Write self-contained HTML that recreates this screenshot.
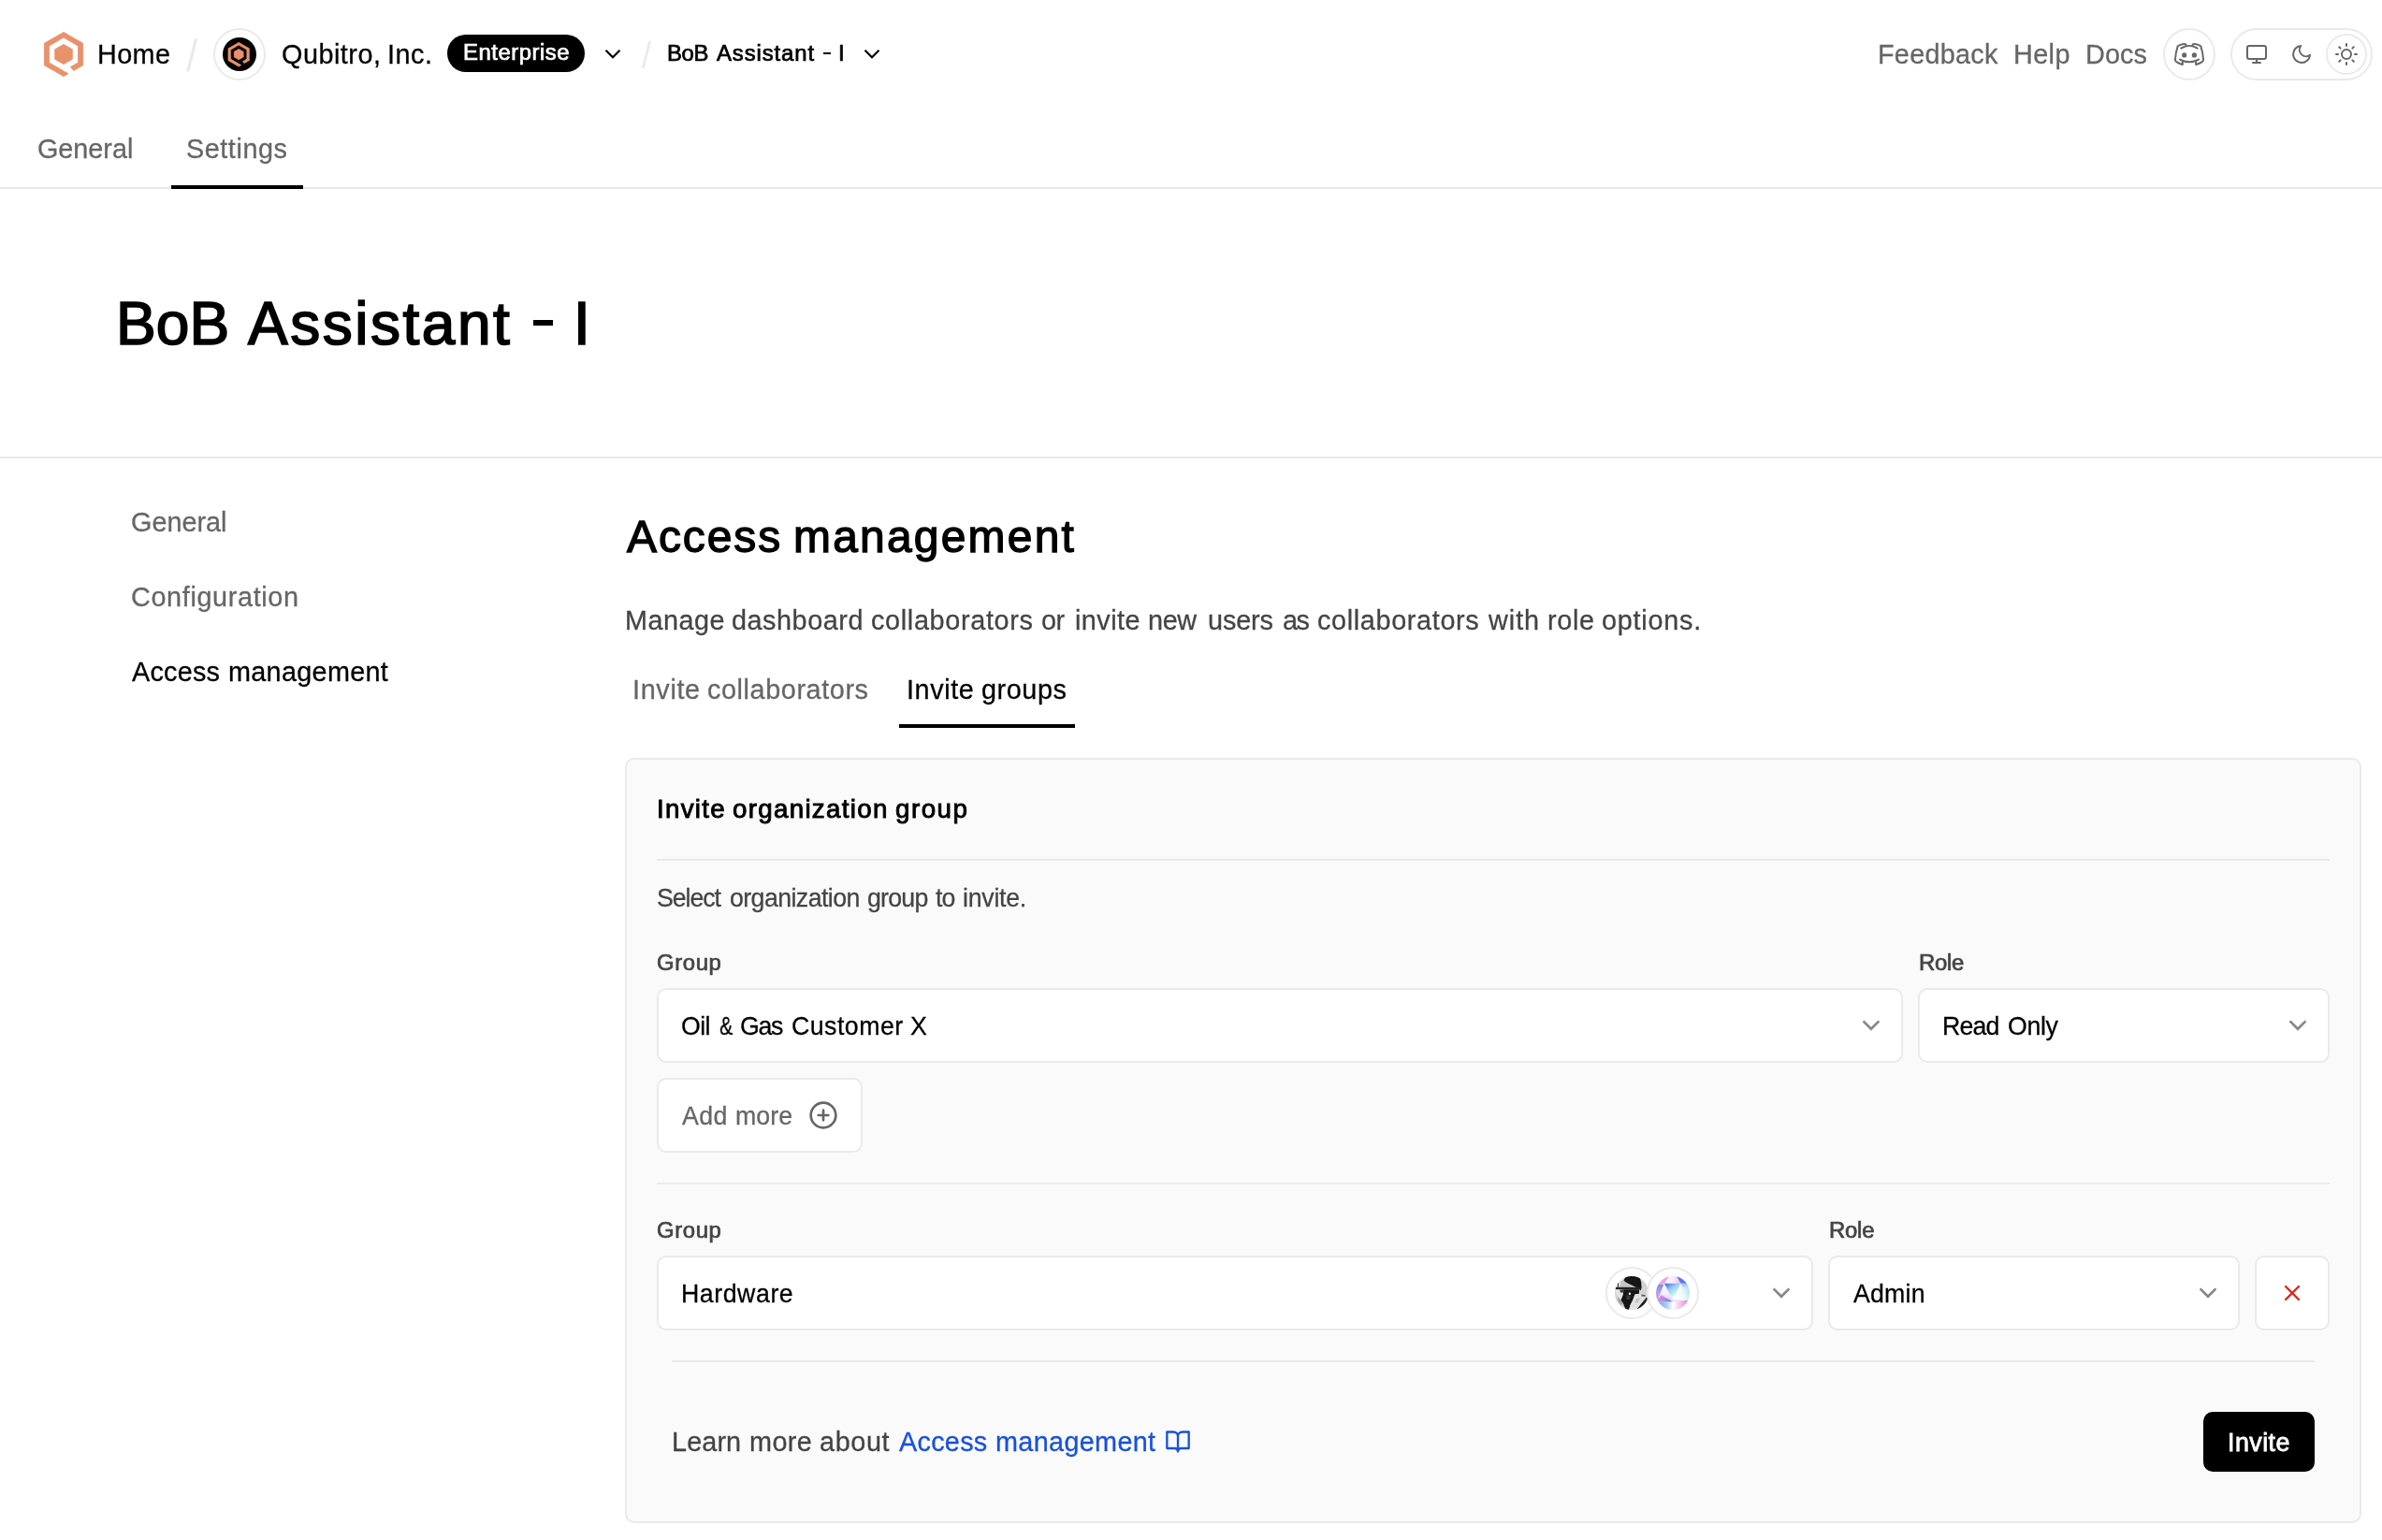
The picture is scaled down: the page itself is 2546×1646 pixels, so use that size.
<!DOCTYPE html>
<html lang="en">
<head>
<meta charset="utf-8">
<title>BoB Assistant - I – Settings – Access management</title>
<style>
*{box-sizing:border-box;margin:0;padding:0}
html,body{width:2546px;height:1646px;background:#fff}
body{overflow:hidden}
body{position:relative;font-family:"Liberation Sans",sans-serif;font-kerning:none}
h1,h2,h3,p,a,label,span{font-weight:400;font-size:inherit}
.t{will-change:transform;position:absolute;white-space:nowrap;line-height:1;font-weight:400;display:block}
.abs{position:absolute;display:block}
.hr{position:absolute;height:2px;background:#eaeaea}
.ring{position:absolute;border:2px solid #eaeaea;border-radius:50%;background:#fff}
.box{position:absolute;border:2px solid #eaeaea;border-radius:10px;background:#fff;height:80px}
svg{position:absolute;display:block;overflow:visible}
.ic{fill:none;stroke-width:2;stroke-linecap:round;stroke-linejoin:round}
#home{left:104.04px;top:43.86px;font-size:28.79px;letter-spacing:0.382px;color:#000;-webkit-text-stroke:0.29px #000;}
#org_0{left:300.84px;top:43.66px;font-size:28.79px;letter-spacing:0.504px;color:#000;-webkit-text-stroke:0.29px #000;}
#org_1{left:414.44px;top:43.66px;font-size:28.79px;letter-spacing:0.539px;color:#000;-webkit-text-stroke:0.29px #000;}
#ent{left:494.66px;top:44.34px;font-size:23.89px;letter-spacing:0.528px;color:#fff;-webkit-text-stroke:0.72px #fff;}
#crumb_0{left:713.36px;top:45.44px;font-size:23.89px;letter-spacing:-0.36px;color:#000;-webkit-text-stroke:0.72px #000;}
#crumb_1{left:766.16px;top:45.44px;font-size:23.89px;letter-spacing:0.894px;color:#000;-webkit-text-stroke:0.72px #000;}
#crumb_2{left:880.0px;top:56.0px;width:7.6px;height:2.2px;background:#000;color:transparent;font-size:23.89px;overflow:hidden;line-height:0}
#crumb_3{left:895.8px;top:45.44px;font-size:23.89px;letter-spacing:0px;color:#000;-webkit-text-stroke:0.72px #000;}
#fb{left:2006.94px;top:43.66px;font-size:28.79px;letter-spacing:0.272px;color:#666;-webkit-text-stroke:0.29px #666;}
#help{left:2152.34px;top:43.66px;font-size:28.79px;letter-spacing:0.409px;color:#666;-webkit-text-stroke:0.29px #666;}
#docs{left:2229.14px;top:43.66px;font-size:28.79px;letter-spacing:0.11px;color:#666;-webkit-text-stroke:0.29px #666;}
#tab1{left:40.44px;top:144.66px;font-size:28.79px;letter-spacing:-0.014px;color:#666;-webkit-text-stroke:0.29px #666;}
#tab2{left:199.44px;top:144.66px;font-size:28.79px;letter-spacing:0.558px;color:#666;-webkit-text-stroke:0.29px #666;}
#title_0{left:124.46px;top:313.84px;font-size:64.02px;letter-spacing:0.095px;color:#000;-webkit-text-stroke:1.73px #000;}
#title_1{left:265.46px;top:313.84px;font-size:64.02px;letter-spacing:2.525px;color:#000;-webkit-text-stroke:1.73px #000;}
#title_2{left:569.8px;top:341.5px;width:21.3px;height:6.3px;background:#000;color:transparent;font-size:64.02px;overflow:hidden;line-height:0}
#title_3{left:612.55px;top:313.84px;font-size:64.02px;letter-spacing:0px;color:#000;-webkit-text-stroke:1.73px #000;}
#s1{left:140.34px;top:543.66px;font-size:28.79px;letter-spacing:0.002px;color:#666;-webkit-text-stroke:0.29px #666;}
#s2{left:140.34px;top:623.66px;font-size:28.79px;letter-spacing:0.652px;color:#666;-webkit-text-stroke:0.29px #666;}
#s3_0{left:141.04px;top:703.76px;font-size:28.79px;letter-spacing:0.227px;color:#000;-webkit-text-stroke:0.29px #000;}
#s3_1{left:244.34px;top:703.76px;font-size:28.79px;letter-spacing:0.313px;color:#000;-webkit-text-stroke:0.29px #000;}
#h2_0{left:670.27px;top:550.03px;font-size:47.94px;letter-spacing:1.923px;color:#000;-webkit-text-stroke:1.34px #000;}
#h2_1{left:847.57px;top:550.03px;font-size:47.94px;letter-spacing:2.23px;color:#000;-webkit-text-stroke:1.34px #000;}
#desc_0{left:667.84px;top:648.76px;font-size:28.79px;letter-spacing:0.502px;color:#444;-webkit-text-stroke:0.29px #444;}
#desc_1{left:781.94px;top:648.76px;font-size:28.79px;letter-spacing:0.55px;color:#444;-webkit-text-stroke:0.29px #444;}
#desc_2{left:931.34px;top:648.76px;font-size:28.79px;letter-spacing:0.677px;color:#444;-webkit-text-stroke:0.29px #444;}
#desc_3{left:1112.74px;top:648.76px;font-size:28.79px;letter-spacing:-0.395px;color:#444;-webkit-text-stroke:0.29px #444;}
#desc_4{left:1149.04px;top:648.76px;font-size:28.79px;letter-spacing:0.466px;color:#444;-webkit-text-stroke:0.29px #444;}
#desc_5{left:1227.44px;top:648.76px;font-size:28.79px;letter-spacing:-0.351px;color:#444;-webkit-text-stroke:0.29px #444;}
#desc_6{left:1291.24px;top:648.76px;font-size:28.79px;letter-spacing:-0.119px;color:#444;-webkit-text-stroke:0.29px #444;}
#desc_7{left:1370.64px;top:648.76px;font-size:28.79px;letter-spacing:-1.595px;color:#444;-webkit-text-stroke:0.29px #444;}
#desc_8{left:1408.44px;top:648.76px;font-size:28.79px;letter-spacing:0.661px;color:#444;-webkit-text-stroke:0.29px #444;}
#desc_9{left:1591.44px;top:648.76px;font-size:28.79px;letter-spacing:0.979px;color:#444;-webkit-text-stroke:0.29px #444;}
#desc_10{left:1654.04px;top:648.76px;font-size:28.79px;letter-spacing:0.642px;color:#444;-webkit-text-stroke:0.29px #444;}
#desc_11{left:1711.74px;top:648.76px;font-size:28.79px;letter-spacing:0.772px;color:#444;-webkit-text-stroke:0.29px #444;}
#it1_0{left:675.54px;top:722.86px;font-size:28.79px;letter-spacing:0.666px;color:#666;-webkit-text-stroke:0.29px #666;}
#it1_1{left:756.24px;top:722.86px;font-size:28.79px;letter-spacing:0.602px;color:#666;-webkit-text-stroke:0.29px #666;}
#it2_0{left:969.14px;top:722.96px;font-size:28.79px;letter-spacing:0.586px;color:#000;-webkit-text-stroke:0.29px #000;}
#it2_1{left:1048.64px;top:722.96px;font-size:28.79px;letter-spacing:0.58px;color:#000;-webkit-text-stroke:0.29px #000;}
#ch_0{left:701.66px;top:851.24px;font-size:27.74px;letter-spacing:1.264px;color:#000;-webkit-text-stroke:0.92px #000;}
#ch_1{left:783.26px;top:851.24px;font-size:27.74px;letter-spacing:1.291px;color:#000;-webkit-text-stroke:0.92px #000;}
#ch_2{left:956.76px;top:851.24px;font-size:27.74px;letter-spacing:1.494px;color:#000;-webkit-text-stroke:0.92px #000;}
#csub_0{left:702.03px;top:947.37px;font-size:26.73px;letter-spacing:-1.061px;color:#444;-webkit-text-stroke:0.27px #444;}
#csub_1{left:779.83px;top:947.37px;font-size:26.73px;letter-spacing:-0.571px;color:#444;-webkit-text-stroke:0.27px #444;}
#csub_2{left:926.63px;top:947.37px;font-size:26.73px;letter-spacing:-0.761px;color:#444;-webkit-text-stroke:0.27px #444;}
#csub_3{left:1000.43px;top:947.37px;font-size:26.73px;letter-spacing:-0.991px;color:#444;-webkit-text-stroke:0.27px #444;}
#csub_4{left:1029.03px;top:947.37px;font-size:26.73px;letter-spacing:-0.257px;color:#444;-webkit-text-stroke:0.27px #444;}
#lg1{left:702.26px;top:1016.94px;font-size:23.89px;letter-spacing:0.626px;color:#444;-webkit-text-stroke:0.72px #444;}
#lr1{left:2050.86px;top:1017.04px;font-size:23.89px;letter-spacing:-0.28px;color:#444;-webkit-text-stroke:0.72px #444;}
#v1_0{left:728.23px;top:1083.77px;font-size:26.73px;letter-spacing:-0.643px;color:#000;-webkit-text-stroke:0.27px #000;}
#v1_1{left:768.93px;top:1083.77px;font-size:26.73px;letter-spacing:0px;color:#000;-webkit-text-stroke:0.27px #000;transform:scaleX(0.796);transform-origin:0 0;}
#v1_2{left:791.43px;top:1083.77px;font-size:26.73px;letter-spacing:-1.305px;color:#000;-webkit-text-stroke:0.27px #000;}
#v1_3{left:846.43px;top:1083.77px;font-size:26.73px;letter-spacing:0.474px;color:#000;-webkit-text-stroke:0.27px #000;}
#v1_4{left:972.65px;top:1083.77px;font-size:26.73px;letter-spacing:0px;color:#000;-webkit-text-stroke:0.27px #000;}
#v2_0{left:2075.63px;top:1083.87px;font-size:26.73px;letter-spacing:-0.827px;color:#000;-webkit-text-stroke:0.27px #000;}
#v2_1{left:2145.93px;top:1083.87px;font-size:26.73px;letter-spacing:-0.349px;color:#000;-webkit-text-stroke:0.27px #000;}
#add_0{left:728.53px;top:1179.77px;font-size:26.73px;letter-spacing:0.376px;color:#666;-webkit-text-stroke:0.27px #666;}
#add_1{left:786.33px;top:1179.77px;font-size:26.73px;letter-spacing:0.04px;color:#666;-webkit-text-stroke:0.27px #666;}
#lg2{left:702.26px;top:1303.34px;font-size:23.89px;letter-spacing:0.626px;color:#444;-webkit-text-stroke:0.72px #444;}
#lr2{left:1954.76px;top:1303.34px;font-size:23.89px;letter-spacing:-0.214px;color:#444;-webkit-text-stroke:0.72px #444;}
#v3{left:727.53px;top:1369.87px;font-size:26.73px;letter-spacing:0.553px;color:#000;-webkit-text-stroke:0.27px #000;}
#v4{left:1980.73px;top:1369.87px;font-size:26.73px;letter-spacing:0.215px;color:#000;-webkit-text-stroke:0.27px #000;}
#learn_0{left:717.94px;top:1526.56px;font-size:28.79px;letter-spacing:0.127px;color:#444;-webkit-text-stroke:0.29px #444;}
#learn_1{left:800.84px;top:1526.56px;font-size:28.79px;letter-spacing:0.415px;color:#444;-webkit-text-stroke:0.29px #444;}
#learn_2{left:876.04px;top:1526.56px;font-size:28.79px;letter-spacing:0.646px;color:#444;-webkit-text-stroke:0.29px #444;}
#link_0{left:960.84px;top:1526.56px;font-size:28.79px;letter-spacing:0.287px;color:#1851dc;-webkit-text-stroke:0.29px #1851dc;}
#link_1{left:1064.34px;top:1526.56px;font-size:28.79px;letter-spacing:0.346px;color:#1851dc;-webkit-text-stroke:0.29px #1851dc;}
#inv{left:2381.2px;top:1528.5px;font-size:26.88px;letter-spacing:0.441px;color:#fff;-webkit-text-stroke:0.81px #fff;}
</style>
</head>
<body>

<!-- ===== top navigation ===== -->
<header>
  <svg id="logo" style="left:43.9px;top:34px" width="48" height="48" viewBox="-24 -24 48 48">
    <g fill="#e9916b" stroke="#e9916b" stroke-width="0.8" stroke-linejoin="round">
      <path d="M10.7 17.5 L20.6 11.8 L20.6 -11.8 L0 -23.6 L-20.6 -11.8 L-20.6 11.8 L0 23.6 L5 20.75 L0 17.9 L-15.5 8.95 L-15.5 -8.95 L0 -17.9 L15.5 -8.95 L15.5 8.95 L7.4 13.6 Z"/>
      <path d="M0 -10.6 L9.3 -5.3 L9.3 5.3 L0 10.6 L-9.3 5.3 L-9.3 -5.3 Z"/>
    </g>
  </svg>
  <a><span class="t" id="home">Home</span></a>
  <svg style="left:0;top:0" width="1" height="1"><g stroke="#eaeaea" stroke-linecap="butt">
    <line x1="209.7" y1="41.1" x2="200.7" y2="76.6" stroke-width="3.3"/>
    <line x1="694.6" y1="44.1" x2="687.3" y2="72.8" stroke-width="2.7"/>
  </g></svg>
  <div class="ring" style="left:228px;top:30px;width:56px;height:56px"></div>
  <div class="abs" style="left:238px;top:40px;width:36px;height:36px;border-radius:50%;background:#000"></div>
  <svg style="left:242.45px;top:44.7px" width="26.4" height="26.4" viewBox="-24 -24 48 48">
    <g fill="#e9916b" stroke="#e9916b" stroke-width="0.8" stroke-linejoin="round">
      <path d="M10.7 17.5 L20.6 11.8 L20.6 -11.8 L0 -23.6 L-20.6 -11.8 L-20.6 11.8 L0 23.6 L5 20.75 L0 17.9 L-15.5 8.95 L-15.5 -8.95 L0 -17.9 L15.5 -8.95 L15.5 8.95 L7.4 13.6 Z"/>
      <path d="M0 -10.6 L9.3 -5.3 L9.3 5.3 L0 10.6 L-9.3 5.3 L-9.3 -5.3 Z"/>
    </g>
  </svg>
  <span><span class="t" id="org_0">Qubitro,</span> <span class="t" id="org_1">Inc.</span></span>
  <div class="abs" style="left:478px;top:37px;width:147px;height:40px;border-radius:20px;background:#000"></div>
  <span><span class="t" id="ent">Enterprise</span></span>
  <svg style="left:0;top:0" width="1" height="1"><polyline fill="none" stroke="#000" stroke-width="2.2" stroke-linecap="butt" stroke-linejoin="miter" points="647.50 53.68 655.00 61.18 662.50 53.68"/></svg>
  <span><span class="t" id="crumb_0">BoB</span> <span class="t" id="crumb_1">Assistant</span> <span class="t" id="crumb_2">-</span> <span class="t" id="crumb_3">I</span></span>
  <svg style="left:0;top:0" width="1" height="1"><polyline fill="none" stroke="#000" stroke-width="2.2" stroke-linecap="butt" stroke-linejoin="miter" points="924.50 53.68 932.00 61.18 939.50 53.68"/></svg>

  <a><span class="t" id="fb">Feedback</span></a>
  <a><span class="t" id="help">Help</span></a>
  <a><span class="t" id="docs">Docs</span></a>
  <div class="ring" style="left:2312px;top:30px;width:56px;height:56px"></div>
  <svg id="discord" style="left:2316px;top:38px" width="48" height="40" viewBox="0 0 48 40">
    <g class="ic" stroke="#666">
      <path d="M15.3 13.7 C20.6 10.1 27.4 10.1 32.7 13.7"/>
      <path d="M14 25.6 C20 29 28 29 34 25.6"/>
      <path d="M20.6 10.6 C20.4 9.3 19.3 8.7 17.9 8.95 C15.6 9.3 13.4 10.1 11.7 11.3 C10.3 15.5 9.2 21 8.95 26 C9 27 9.6 27.7 10.4 28.1 C12.2 29.3 14.2 30.3 16.1 30.9 C16.7 31 17 30.8 17 30.3 L16.7 28.2"/>
      <path d="M27.4 10.6 C27.6 9.3 28.7 8.7 30.1 8.95 C32.4 9.3 34.6 10.1 36.3 11.3 C37.7 15.5 38.8 21 39.05 26 C39 27 38.4 27.7 37.6 28.1 C35.8 29.3 33.8 30.3 31.9 30.9 C31.3 31 31 30.8 31 30.3 L31.3 28.2"/>
    </g>
    <circle cx="18.65" cy="20.9" r="2.6" fill="#666"/><circle cx="29.35" cy="20.9" r="2.6" fill="#666"/>
  </svg>
  <div class="abs" style="left:2384px;top:30px;width:152px;height:56px;border:2px solid #eaeaea;border-radius:28px;background:#fff"></div>
  <div class="ring" style="left:2486px;top:36px;width:44px;height:44px"></div>
  <svg style="left:2400px;top:46px" width="24" height="24" viewBox="0 0 24 24"><g class="ic" stroke="#666"><rect x="2" y="3" width="20" height="14" rx="2"/><path d="M8 21h8M12 17v4"/></g></svg>
  <svg style="left:2448px;top:46px" width="24" height="24" viewBox="0 0 24 24"><path class="ic" stroke="#666" d="M21 12.79A9 9 0 1 1 11.21 3 7 7 0 0 0 21 12.79z"/></svg>
  <svg style="left:2496px;top:46px" width="24" height="24" viewBox="0 0 24 24"><g class="ic" stroke="#666"><circle cx="12" cy="12" r="5"/><path d="M12 1v2M12 21v2M4.22 4.22l1.42 1.42M18.36 18.36l1.42 1.42M1 12h2M21 12h2M4.22 19.78l1.42-1.42M18.36 5.64l1.42-1.42"/></g></svg>
</header>

<!-- ===== page tabs ===== -->
<nav>
  <a><span class="t" id="tab1">General</span></a>
  <a><span class="t" id="tab2">Settings</span></a>
  <div class="hr" style="left:0;top:200px;width:2546px"></div>
  <div class="abs" style="left:183px;top:198px;width:141px;height:4px;background:#000"></div>
</nav>

<!-- ===== page title ===== -->
<h1><span class="t" id="title_0">BoB</span> <span class="t" id="title_1">Assistant</span> <span class="t" id="title_2">-</span> <span class="t" id="title_3">I</span></h1>
<div class="hr" style="left:0;top:488px;width:2546px"></div>

<!-- ===== settings sidebar ===== -->
<aside>
  <a><span class="t" id="s1">General</span></a>
  <a><span class="t" id="s2">Configuration</span></a>
  <a><span class="t" id="s3_0">Access</span> <span class="t" id="s3_1">management</span></a>
</aside>

<!-- ===== main content ===== -->
<main>
  <h2><span class="t" id="h2_0">Access</span> <span class="t" id="h2_1">management</span></h2>
  <p><span class="t" id="desc_0">Manage</span> <span class="t" id="desc_1">dashboard</span> <span class="t" id="desc_2">collaborators</span> <span class="t" id="desc_3">or</span> <span class="t" id="desc_4">invite</span> <span class="t" id="desc_5">new</span> <span class="t" id="desc_6">users</span> <span class="t" id="desc_7">as</span> <span class="t" id="desc_8">collaborators</span> <span class="t" id="desc_9">with</span> <span class="t" id="desc_10">role</span> <span class="t" id="desc_11">options.</span></p>
  <a><span class="t" id="it1_0">Invite</span> <span class="t" id="it1_1">collaborators</span></a>
  <a><span class="t" id="it2_0">Invite</span> <span class="t" id="it2_1">groups</span></a>
  <div class="abs" style="left:961px;top:774px;width:188px;height:4px;background:#000"></div>

  <section class="abs" style="left:668px;top:810px;width:1856px;height:818px;border:2px solid #eaeaea;border-radius:10px;background:#fafafa"></section>
  <h3><span class="t" id="ch_0">Invite</span> <span class="t" id="ch_1">organization</span> <span class="t" id="ch_2">group</span></h3>
  <div class="hr" style="left:702px;top:918px;width:1788px"></div>
  <p><span class="t" id="csub_0">Select</span> <span class="t" id="csub_1">organization</span> <span class="t" id="csub_2">group</span> <span class="t" id="csub_3">to</span> <span class="t" id="csub_4">invite.</span></p>

  <label><span class="t" id="lg1">Group</span></label>
  <label><span class="t" id="lr1">Role</span></label>
  <div class="box" style="left:702px;top:1056px;width:1332px"></div>
  <span><span class="t" id="v1_0">Oil</span> <span class="t" id="v1_1">&amp;</span> <span class="t" id="v1_2">Gas</span> <span class="t" id="v1_3">Customer</span> <span class="t" id="v1_4">X</span></span>
  <svg style="left:0;top:0" width="1" height="1"><polyline fill="none" stroke="#888" stroke-width="2.7" stroke-linecap="butt" stroke-linejoin="miter" points="1991.55 1091.36 1999.95 1099.76 2008.35 1091.36"/></svg>
  <div class="box" style="left:2050px;top:1056px;width:440px"></div>
  <span><span class="t" id="v2_0">Read</span> <span class="t" id="v2_1">Only</span></span>
  <svg style="left:0;top:0" width="1" height="1"><polyline fill="none" stroke="#888" stroke-width="2.7" stroke-linecap="butt" stroke-linejoin="miter" points="2447.60 1091.36 2456.00 1099.76 2464.40 1091.36"/></svg>

  <div class="box" style="left:702px;top:1152px;width:220px"></div>
  <span><span class="t" id="add_0">Add</span> <span class="t" id="add_1">more</span></span>
  <svg style="left:864px;top:1176px" width="32" height="32" viewBox="0 0 24 24"><g class="ic" stroke="#666"><circle cx="12" cy="12" r="10"/><path d="M12 8v8M8 12h8"/></g></svg>
  <div class="hr" style="left:702px;top:1264px;width:1788px"></div>

  <label><span class="t" id="lg2">Group</span></label>
  <label><span class="t" id="lr2">Role</span></label>
  <div class="box" style="left:702px;top:1342px;width:1236px"></div>
  <span><span class="t" id="v3">Hardware</span></span>
  <!-- member avatars -->
  <div class="ring" style="left:1716px;top:1354px;width:56px;height:56px"></div>
  <svg id="av1" style="left:1726px;top:1364px" width="36" height="36" viewBox="0 0 36 36">
    <defs><clipPath id="c1"><circle cx="18" cy="18" r="18"/></clipPath><filter id="b1" x="-10%" y="-10%" width="120%" height="120%"><feGaussianBlur stdDeviation="0.7"/></filter></defs>
    <g clip-path="url(#c1)"><g filter="url(#b1)">
      <rect x="-3" y="-3" width="42" height="42" fill="#d3d3d3"/>
      <polygon points="-3,-3 13,-3 9,4 6,11.5 -3,14" fill="#e4e4e4"/>
      <polygon points="6.5,5 9.5,4.5 12.2,6.7 16.6,8.9 17.5,11.8 5.5,11.8" fill="#c6c6c6"/>
      <rect x="2.9" y="7.4" width="1.2" height="4.4" fill="#3a3a3a"/>
      <polygon points="11.3,1.2 18.8,-1.5 26.8,1.2 28.2,6.7 28.6,12.5 27.6,15.2 23.1,12 16.6,8.9 12.2,6.7 9.4,4.4" fill="#141414"/>
      <rect x="0.6" y="11.8" width="27" height="2.5" fill="#222"/>
      <polygon points="0.3,14.3 6.5,14.3 8.8,19.9 6.6,25.4 3,22" fill="#e4e4e4"/>
      <polygon points="5.4,14.6 9.6,14.6 9,17.6 5.8,17.4" fill="#3c3c3c"/>
      <polygon points="3,22 6.6,25.4 8.8,28.7 7,31.5 3.5,27" fill="#a2a2a2"/>
      <polygon points="7,31.5 8.8,28.7 12.1,36.8 8.5,36.8" fill="#cdcdcd"/>
      <polygon points="9.4,14.2 26,14.2 26,18.8 21.5,19.4 19.3,25.4 16.5,30.9 14.9,37 12.1,37 8.8,28.7 6.6,25.4 8.8,19.9" fill="#181818"/>
      <polygon points="12.5,20.5 17,20.5 16,25 12.5,25" fill="#3b3b3b"/>
      <circle cx="15.9" cy="18.8" r="1.2" fill="#f2f2f2"/>
      <polygon points="21.5,19.4 26,18.8 34,19.6 38,23 30,30.5 22,37.5 14.9,37 16.5,30.9 19.3,25.4" fill="#e1e1e1"/>
      <polygon points="28.2,19.5 32.8,19.9 32.5,21.7 28.5,21.4" fill="#5c5c5c"/>
      <polygon points="23,24 27,23 25,28 21.5,29" fill="#c4c4c4"/>
      <polygon points="34,22.3 38,27 30,34.5 21.5,37.8 27,31 32,25" fill="#1d1d1d"/>
    </g></g>
  </svg>
  <div class="ring" style="left:1760px;top:1354px;width:56px;height:56px"></div>
  <svg id="av2" style="left:1770px;top:1364px" width="36" height="36" viewBox="0 0 36 36">
    <defs>
      <clipPath id="c2"><circle cx="18" cy="18" r="18"/></clipPath>
      <filter id="b2" x="-10%" y="-10%" width="120%" height="120%"><feGaussianBlur stdDeviation="0.45"/></filter>
      <linearGradient id="gA" x1="0" y1="0" x2="1" y2="0"><stop offset="0" stop-color="#fff"/><stop offset=".6" stop-color="#f7e6fa"/><stop offset="1" stop-color="#eeb0e8"/></linearGradient>
      <linearGradient id="gD" x1="0" y1="0" x2=".8" y2="1"><stop offset="0" stop-color="#2f66f2"/><stop offset=".4" stop-color="#9fc6f3"/><stop offset=".62" stop-color="#aeeeea"/><stop offset=".85" stop-color="#fff"/></linearGradient>
      <linearGradient id="gE" x1=".6" y1="0" x2=".3" y2="1"><stop offset="0" stop-color="#fff"/><stop offset=".55" stop-color="#f3ecfb"/><stop offset="1" stop-color="#d59be2"/></linearGradient>
      <linearGradient id="gE2" x1="0" y1="0" x2="1" y2="0"><stop offset="0" stop-color="#e486d8"/><stop offset=".45" stop-color="#b08fe4"/><stop offset="1" stop-color="#3f6fec"/></linearGradient>
      <linearGradient id="gG" x1="0" y1=".6" x2="1" y2=".3"><stop offset="0" stop-color="#fff"/><stop offset=".45" stop-color="#f2fbfd"/><stop offset=".85" stop-color="#b3e8ee"/><stop offset="1" stop-color="#a9c0f4"/></linearGradient>
      <linearGradient id="gH" x1="0" y1="0" x2="1" y2="0"><stop offset="0" stop-color="#4fb0e6"/><stop offset=".3" stop-color="#a9c8f2"/><stop offset=".52" stop-color="#fff"/><stop offset=".75" stop-color="#f7c4e8"/><stop offset="1" stop-color="#ee86d0"/></linearGradient>
      <linearGradient id="gF" x1="0" y1="0" x2="0" y2="1"><stop offset="0" stop-color="#7d8fe8"/><stop offset=".6" stop-color="#b9a2e6"/><stop offset="1" stop-color="#e098da"/></linearGradient>
      <linearGradient id="gR" x1="0" y1="0" x2="1" y2="1"><stop offset="0" stop-color="#8fa6f0"/><stop offset="1" stop-color="#dfe9fb"/></linearGradient>
    </defs>
    <g clip-path="url(#c2)"><g filter="url(#b2)">
      <rect x="-2" y="-2" width="40" height="40" fill="#e6e8fb"/>
      <polygon points="9,7.7 15,-1 22.6,-1 26.5,7.7" fill="url(#gA)"/>
      <polygon points="1,11 9,7.7 15,-1 5,1" fill="#eaa6e2"/>
      <polygon points="21.5,-1 30,3 34,8 26.5,7.7" fill="#5679e6"/>
      <polygon points="26.5,7.7 34,8 38,18 34,25.8 18,24.8" fill="url(#gG)"/>
      <polygon points="26.5,7.7 34,8 36,13 29,12" fill="url(#gR)" opacity=".8"/>
      <polygon points="9,7.7 26.5,7.7 18.2,24.8" fill="url(#gD)"/>
      <polygon points="-2,17 2.5,8.9 8.4,8.9 1.9,25.3 -2,25" fill="url(#gF)"/>
      <polygon points="8.4,8.9 17.7,27.6 1.9,25.3" fill="url(#gE)"/>
      <polygon points="6,20.5 17.7,27.6 1.9,27.6 1.9,25" fill="url(#gE2)"/>
      <polygon points="1,27.6 17.7,27.6 34,25.8 33,34 18,38 3,34" fill="url(#gH)"/>
    </g></g>
  </svg>
  <svg style="left:0;top:0" width="1" height="1"><polyline fill="none" stroke="#888" stroke-width="2.7" stroke-linecap="butt" stroke-linejoin="miter" points="1895.60 1377.36 1904.00 1385.76 1912.40 1377.36"/></svg>
  <div class="box" style="left:1954px;top:1342px;width:440px"></div>
  <span><span class="t" id="v4">Admin</span></span>
  <svg style="left:0;top:0" width="1" height="1"><polyline fill="none" stroke="#888" stroke-width="2.7" stroke-linecap="butt" stroke-linejoin="miter" points="2351.60 1377.36 2360.00 1385.76 2368.40 1377.36"/></svg>
  <div class="box" style="left:2410px;top:1342px;width:80px"></div>
  <svg style="left:2436px;top:1368px" width="28" height="28" viewBox="0 0 24 24"><path class="ic" style="stroke-width:2" stroke="#e82010" d="M18 6L6 18M6 6l12 12"/></svg>

  <div class="hr" style="left:718px;top:1454px;width:1756px"></div>
  <span><span class="t" id="learn_0">Learn</span> <span class="t" id="learn_1">more</span> <span class="t" id="learn_2">about</span></span>
  <a><span class="t" id="link_0">Access</span> <span class="t" id="link_1">management</span></a>
  <svg style="left:1244.8px;top:1527px" width="28" height="28" viewBox="0 0 24 24"><path class="ic" stroke="#1851dc" d="M2 3h6a4 4 0 0 1 4 4v14a3 3 0 0 0-3-3H2zM22 3h-6a4 4 0 0 0-4 4v14a3 3 0 0 1 3-3h7z"/></svg>
  <div class="abs" style="left:2355px;top:1509px;width:119px;height:64px;border-radius:10px;background:#000"></div>
  <span><span class="t" id="inv">Invite</span></span>
</main>

</body>
</html>
